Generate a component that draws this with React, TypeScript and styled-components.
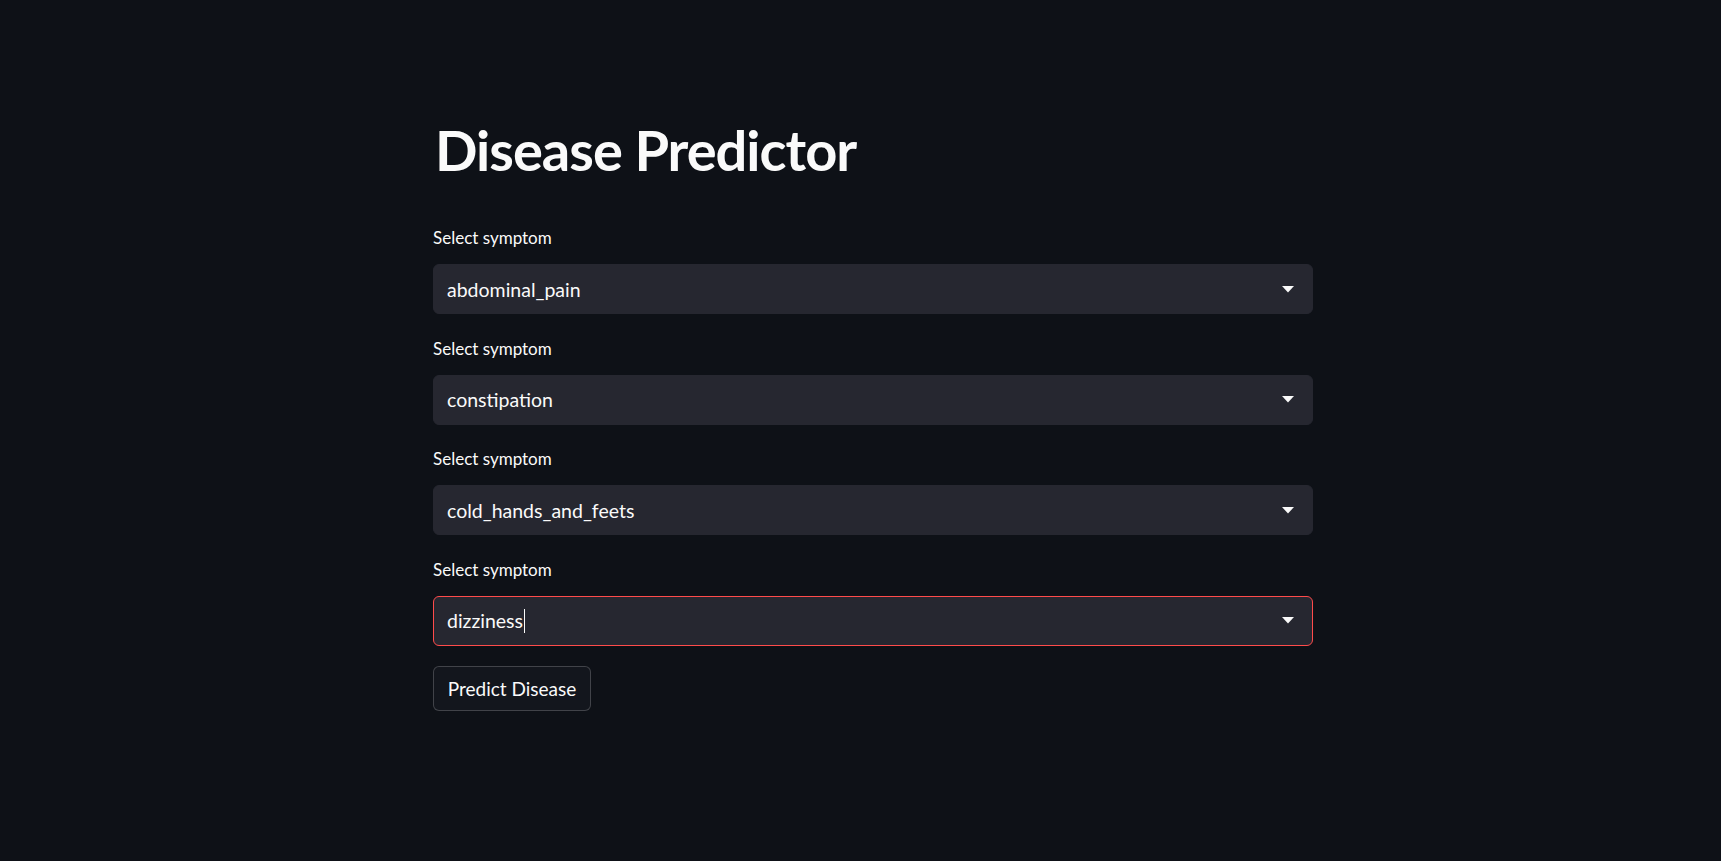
import React from "react";
import styled, { createGlobalStyle } from "styled-components";

const GlobalStyle = createGlobalStyle`
  html, body {
    margin: 0;
    padding: 0;
    background: #0e1117;
  }
  body {
    font-family: Lato, "Noto Sans", sans-serif;
    color: #fafafa;
  }
`;

const Main = styled.main`
  min-height: 100vh;
  box-sizing: border-box;
  display: flex;
  justify-content: center;
  padding: 112px 0 0 25px;
`;

const Content = styled.div`
  width: 880px;
  display: flex;
  flex-direction: column;
`;

const Title = styled.h1`
  margin: 0 0 0 2px;
  font-family: Lato, "Noto Sans", sans-serif;
  font-weight: 700;
  font-size: 56px;
  line-height: 76px;
  color: #fafafa;
  letter-spacing: -1px;
`;

const Form = styled.div`
  display: flex;
  flex-direction: column;
  gap: 20.5px;
  margin-top: 36px;
`;

const Field = styled.div`
  display: flex;
  flex-direction: column;
`;

const Label = styled.label`
  font-size: 17px;
  line-height: 24px;
  height: 35px;
  margin-bottom: 5px;
  display: flex;
  align-items: flex-start;
  padding-top: 2px;
  box-sizing: border-box;
  color: #fafafa;
`;

const SelectBox = styled.div<{ $focused?: boolean }>`
  height: 50px;
  box-sizing: border-box;
  background: #262730;
  border-radius: 6px;
  border: 1px solid ${(p) => (p.$focused ? "#ff4b4b" : "#262730")};
  display: flex;
  align-items: center;
  justify-content: space-between;
  padding: 0 18px 0 13px;
`;

const Value = styled.span`
  font-size: 19.5px;
  color: #fafafa;
  display: flex;
  align-items: center;
`;

const Caret = styled.span`
  display: inline-block;
  width: 1.5px;
  height: 24px;
  background: #fafafa;
  margin-left: 1px;
`;

const Button = styled.button`
  align-self: flex-start;
  height: 45px;
  width: 158px;
  box-sizing: border-box;
  background: #13161d;
  border: 1px solid rgba(250, 250, 250, 0.2);
  border-radius: 6px;
  color: #fafafa;
  font-family: Lato, "Noto Sans", sans-serif;
  font-size: 19px;
  padding: 0;
  cursor: pointer;
`;

const Arrow = () => (
  <svg width="12" height="7" viewBox="0 0 12 7">
    <path d="M0 0 H12 L6 6.5 Z" fill="#fafafa" />
  </svg>
);

const symptoms = ["abdominal_pain", "constipation", "cold_hands_and_feets", "dizziness"];

export default function App() {
  return (
    <>
      <GlobalStyle />
      <Main>
        <Content>
          <Title>Disease Predictor</Title>
          <Form>
            {symptoms.map((s, i) => {
              const focused = i === symptoms.length - 1;
              return (
                <Field key={s}>
                  <Label>Select symptom</Label>
                  <SelectBox $focused={focused}>
                    <Value>
                      {s}
                      {focused && <Caret />}
                    </Value>
                    <Arrow />
                  </SelectBox>
                </Field>
              );
            })}
            <Button>Predict Disease</Button>
          </Form>
        </Content>
      </Main>
    </>
  );
}
